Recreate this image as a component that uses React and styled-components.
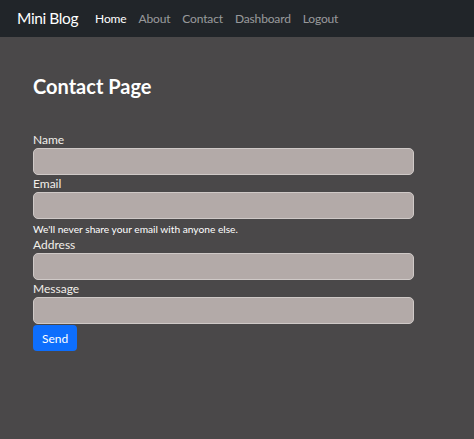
import React from 'react';
import styled, { createGlobalStyle } from 'styled-components';

const GlobalStyle = createGlobalStyle`
  html, body {
    margin: 0;
    padding: 0;
    background: #4a4849;
  }
  body {
    font-family: Lato, 'Open Sans', sans-serif;
  }
  * {
    box-sizing: border-box;
  }
`;

const Page = styled.div`
  min-height: 439px;
  background: #4a4849;
`;

const Navbar = styled.nav`
  height: 37px;
  background: #212529;
  display: flex;
  align-items: center;
  padding: 0 17px 1px;
`;

const Brand = styled.a`
  color: #fff;
  font-size: 15.5px;
  letter-spacing: -0.4px;
  margin-right: 17px;
  text-decoration: none;
`;

const NavList = styled.div`
  display: flex;
  gap: 12px;
`;

const NavLink = styled.a`
  color: ${props => (props.active ? '#fff' : 'rgba(255, 255, 255, 0.55)')};
  font-size: 12px;
  letter-spacing: -0.15px;
  text-decoration: none;
`;

const Container = styled.main`
  padding: 36px 33px 0;
`;

const Title = styled.h2`
  color: #fff;
  font-size: 20px;
  line-height: 26px;
  font-weight: 700;
  margin: 0 0 32px;
`;

const Form = styled.form`
  display: flex;
  flex-direction: column;
  width: 381px;
`;

const Field = styled.div`
  display: flex;
  flex-direction: column;
`;

const Label = styled.label`
  color: #f2efe9;
  font-size: 12px;
  line-height: 17px;
`;

const Input = styled.input`
  height: 27px;
  width: 100%;
  background: #b3aaa8;
  border: 1px solid #cfc9c7;
  border-radius: 5px;
  padding: 4px 10px;
  font-size: 13px;
  outline: none;
`;

const Help = styled.div`
  color: #fff;
  font-size: 10.2px;
  line-height: 14px;
  margin-top: 3px;
`;

const Button = styled.button`
  align-self: flex-start;
  margin-top: 1px;
  height: 26px;
  padding: 0 9px;
  background: #0d6efd;
  color: #fff;
  border: none;
  border-radius: 4px;
  font-family: inherit;
  font-size: 12px;
  cursor: pointer;
`;

const links = ['Home', 'About', 'Contact', 'Dashboard', 'Logout'];

const App = () => (
  <Page>
    <GlobalStyle />
    <Navbar>
      <Brand href="#">Mini Blog</Brand>
      <NavList>
        {links.map((l, i) => (
          <NavLink key={l} href="#" active={i === 0 ? 1 : 0}>
            {l}
          </NavLink>
        ))}
      </NavList>
    </Navbar>
    <Container>
      <Title>Contact Page</Title>
      <Form onSubmit={e => e.preventDefault()}>
        <Field>
          <Label>Name</Label>
          <Input type="text" />
        </Field>
        <Field>
          <Label>Email</Label>
          <Input type="email" />
          <Help>We'll never share your email with anyone else.</Help>
        </Field>
        <Field>
          <Label>Address</Label>
          <Input type="text" />
        </Field>
        <Field>
          <Label>Message</Label>
          <Input type="text" />
        </Field>
        <Button type="submit">Send</Button>
      </Form>
    </Container>
  </Page>
);

export default App;
